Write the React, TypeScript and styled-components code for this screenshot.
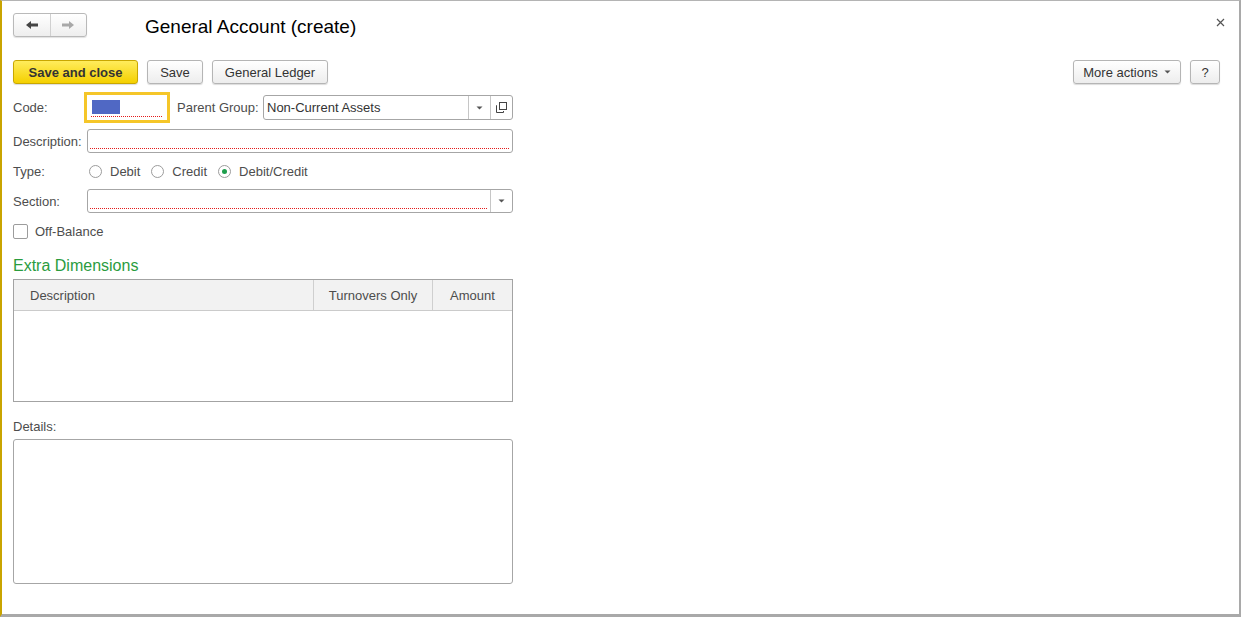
import React from "react";
import styled, { createGlobalStyle } from "styled-components";

const GlobalStyle = createGlobalStyle`
  html, body {
    margin: 0;
    padding: 0;
    background: #ffffff;
  }
  body {
    font-family: "Liberation Sans", Arial, sans-serif;
    font-size: 13px;
    color: #4d4d4d;
  }
`;

const Window = styled.div`
  box-sizing: border-box;
  width: 1241px;
  height: 617px;
  background: #ffffff;
  border-left: 2px solid #c9a400;
  border-top: 1px solid #b4b4b4;
  border-right: 2px solid #a9a9a9;
  border-bottom: 3px solid #a9a9a9;
  padding: 12px 19px 0 11px;
  display: flex;
  flex-direction: column;
`;

const Header = styled.div`
  display: flex;
  align-items: center;
  height: 24px;
`;

const NavGroup = styled.div`
  display: flex;
  width: 74px;
  height: 24px;
  box-sizing: border-box;
  border: 1px solid #b9b9b9;
  border-radius: 3px;
  background: linear-gradient(#ffffff, #eeeeee);
  box-shadow: 0 1px 1px rgba(0, 0, 0, 0.12);
`;

const NavButton = styled.div<{ $first?: boolean }>`
  flex: 1;
  display: flex;
  align-items: center;
  justify-content: center;
  border-left: ${(p) => (p.$first ? "none" : "1px solid #d0d0d0")};
`;

const Title = styled.h1`
  margin: 3px 0 0 58px;
  font-family: "Liberation Sans", Arial, sans-serif;
  font-size: 19px;
  font-weight: normal;
  color: #000000;
  line-height: 24px;
`;

const Close = styled.div`
  margin-left: auto;
  margin-right: -6px;
  align-self: flex-start;
  margin-top: 3px;
  width: 12px;
  height: 12px;
  display: flex;
  align-items: center;
  justify-content: center;
`;

const Toolbar = styled.div`
  display: flex;
  align-items: center;
  gap: 9px;
  margin-top: 23px;
  height: 24px;
`;

const Button = styled.div<{ $primary?: boolean; $width: number }>`
  box-sizing: border-box;
  width: ${(p) => p.$width}px;
  height: 24px;
  display: flex;
  align-items: center;
  justify-content: center;
  gap: 6px;
  border-radius: 3px;
  font-size: 13px;
  font-weight: ${(p) => (p.$primary ? "bold" : "normal")};
  color: #333333;
  border: 1px solid ${(p) => (p.$primary ? "#c9a700" : "#b5b5b5")};
  background: ${(p) =>
    p.$primary
      ? "linear-gradient(#ffec5c, #f4d000)"
      : "linear-gradient(#ffffff, #ededed)"};
  box-shadow: 0 1px 1px rgba(0, 0, 0, 0.14);
`;

const Spacer = styled.div`
  flex: 1;
`;

const Row = styled.div<{ $top: number; $height: number }>`
  display: flex;
  align-items: center;
  margin-top: ${(p) => p.$top}px;
  height: ${(p) => p.$height}px;
`;

const Label = styled.div<{ $width: number; $gap?: number }>`
  width: ${(p) => p.$width}px;
  margin-left: ${(p) => p.$gap ?? 0}px;
  flex-shrink: 0;
  color: #4d4d4d;
  font-size: 13px;
  white-space: nowrap;
`;

const Field = styled.div<{ $width: number; $height?: number }>`
  box-sizing: border-box;
  width: ${(p) => p.$width}px;
  height: ${(p) => p.$height ?? 24}px;
  border: 1px solid #a6a6a6;
  border-radius: 3px;
  background: #ffffff;
  display: flex;
  align-items: stretch;
  overflow: hidden;
`;

const FocusField = styled.div`
  box-sizing: border-box;
  width: 86px;
  height: 31px;
  margin-left: -3px;
  border: 3px solid #f5c629;
  background: #ffffff;
  display: flex;
  align-items: stretch;
  padding: 0 2px;
`;

const InputText = styled.div<{ $required?: boolean }>`
  flex: 1;
  position: relative;
  display: flex;
  align-items: center;
  padding: 0 3px;
  font-size: 13px;
  color: #333333;
  white-space: nowrap;

  &::after {
    content: "";
    display: ${(p) => (p.$required ? "block" : "none")};
    position: absolute;
    left: 2px;
    right: 2px;
    bottom: 3px;
    height: 1px;
    background: repeating-linear-gradient(
      to right,
      #e31b1b 0 1px,
      transparent 1px 2px
    );
  }
`;

const Selection = styled.span`
  display: inline-block;
  width: 28px;
  height: 14px;
  background: #5068c4;
  margin-top: -2px;
`;

const FieldButton = styled.div`
  width: 21px;
  flex-shrink: 0;
  display: flex;
  align-items: center;
  justify-content: center;
  border-left: 1px solid #c6c6c6;
`;

const Radios = styled.div`
  display: flex;
  align-items: center;
  margin-left: 2px;
`;

const RadioOption = styled.div`
  display: flex;
  align-items: center;
  gap: 8px;
  margin-right: 11px;
  color: #4d4d4d;
`;

const RadioCircle = styled.span<{ $checked?: boolean }>`
  box-sizing: border-box;
  width: 13px;
  height: 13px;
  border-radius: 50%;
  border: 1px solid #9c9c9c;
  background: #ffffff;
  display: flex;
  align-items: center;
  justify-content: center;

  &::after {
    content: "";
    display: ${(p) => (p.$checked ? "block" : "none")};
    width: 5px;
    height: 5px;
    border-radius: 50%;
    background: #1e9e4c;
  }
`;

const CheckBox = styled.span`
  box-sizing: border-box;
  width: 15px;
  height: 15px;
  border: 1px solid #9c9c9c;
  border-radius: 2px;
  background: #ffffff;
  margin-right: 7px;
`;

const SectionTitle = styled.div`
  margin-top: 15px;
  height: 20px;
  line-height: 20px;
  font-size: 16px;
  color: #2a9c3e;
`;

const Table = styled.div`
  box-sizing: border-box;
  margin-top: 3px;
  width: 500px;
  height: 123px;
  border: 1px solid #a3a3a3;
  display: flex;
  flex-direction: column;
`;

const TableHead = styled.div`
  display: flex;
  height: 30px;
  background: #f2f2f2;
  border-bottom: 1px solid #cbcbcb;
`;

const HeadCell = styled.div<{ $width: number; $left?: boolean; $last?: boolean }>`
  box-sizing: border-box;
  width: ${(p) => p.$width}px;
  display: flex;
  align-items: center;
  justify-content: ${(p) => (p.$left ? "flex-start" : "center")};
  padding-left: ${(p) => (p.$left ? "16px" : "0")};
  border-right: ${(p) => (p.$last ? "none" : "1px solid #cfcfcf")};
  color: #4d4d4d;
  font-size: 13px;
`;

const DetailsLabel = styled.div`
  margin-top: 17px;
  height: 16px;
  line-height: 16px;
  color: #4d4d4d;
`;

const TextArea = styled.div`
  box-sizing: border-box;
  margin-top: 4px;
  width: 500px;
  height: 145px;
  border: 1px solid #a6a6a6;
  border-radius: 3px;
`;

const ArrowLeft = ({ color }: { color: string }) => (
  <svg width="14" height="10" viewBox="0 0 14 10">
    <path d="M1 5 L6 1 L6 3.6 L13 3.6 L13 6.4 L6 6.4 L6 9 Z" fill={color} />
  </svg>
);

const ArrowRight = ({ color }: { color: string }) => (
  <svg width="14" height="10" viewBox="0 0 14 10">
    <path d="M13 5 L8 1 L8 3.6 L1 3.6 L1 6.4 L8 6.4 L8 9 Z" fill={color} />
  </svg>
);

const Caret = () => (
  <svg width="7" height="4" viewBox="0 0 7 4">
    <path d="M0.5 0.5 L6.5 0.5 L3.5 3.5 Z" fill="#555555" />
  </svg>
);

const OpenIcon = () => (
  <svg width="11" height="11" viewBox="0 0 11 11">
    <rect x="3.5" y="0.5" width="7" height="7" fill="none" stroke="#444" />
    <path d="M1 3.5 L0.5 3.5 L0.5 10.5 L7.5 10.5 L7.5 9" fill="none" stroke="#444" />
  </svg>
);

const CloseIcon = () => (
  <svg width="9" height="9" viewBox="0 0 9 9">
    <path d="M1 1 L8 8 M8 1 L1 8" stroke="#555" strokeWidth="1.2" />
  </svg>
);

export default function App() {
  return (
    <>
      <GlobalStyle />
      <Window>
        <Header>
          <NavGroup>
            <NavButton $first>
              <ArrowLeft color="#444444" />
            </NavButton>
            <NavButton>
              <ArrowRight color="#a8a8a8" />
            </NavButton>
          </NavGroup>
          <Title>General Account (create)</Title>
          <Close>
            <CloseIcon />
          </Close>
        </Header>

        <Toolbar>
          <Button $primary $width={125}>
            Save and close
          </Button>
          <Button $width={56}>Save</Button>
          <Button $width={116}>General Ledger</Button>
          <Spacer />
          <Button $width={108}>
            More actions <Caret />
          </Button>
          <Button $width={30}>?</Button>
        </Toolbar>

        <Row $top={8} $height={31}>
          <Label $width={74}>Code:</Label>
          <FocusField>
            <InputText $required>
              <Selection />
            </InputText>
          </FocusField>
          <Label $width={86} $gap={7}>
            Parent Group:
          </Label>
          <Field $width={250} $height={25}>
            <InputText>Non-Current Assets</InputText>
            <FieldButton>
              <Caret />
            </FieldButton>
            <FieldButton>
              <OpenIcon />
            </FieldButton>
          </Field>
        </Row>

        <Row $top={6} $height={24}>
          <Label $width={74}>Description:</Label>
          <Field $width={426}>
            <InputText $required />
          </Field>
        </Row>

        <Row $top={8} $height={20}>
          <Label $width={74}>Type:</Label>
          <Radios>
            <RadioOption>
              <RadioCircle />
              Debit
            </RadioOption>
            <RadioOption>
              <RadioCircle />
              Credit
            </RadioOption>
            <RadioOption>
              <RadioCircle $checked />
              Debit/Credit
            </RadioOption>
          </Radios>
        </Row>

        <Row $top={8} $height={24}>
          <Label $width={74}>Section:</Label>
          <Field $width={426}>
            <InputText $required />
            <FieldButton>
              <Caret />
            </FieldButton>
          </Field>
        </Row>

        <Row $top={8} $height={20}>
          <CheckBox />
          <Label $width={120}>Off-Balance</Label>
        </Row>

        <SectionTitle>Extra Dimensions</SectionTitle>

        <Table>
          <TableHead>
            <HeadCell $width={300} $left>
              Description
            </HeadCell>
            <HeadCell $width={119}>Turnovers Only</HeadCell>
            <HeadCell $width={79} $last>
              Amount
            </HeadCell>
          </TableHead>
        </Table>

        <DetailsLabel>Details:</DetailsLabel>
        <TextArea />
      </Window>
    </>
  );
}
